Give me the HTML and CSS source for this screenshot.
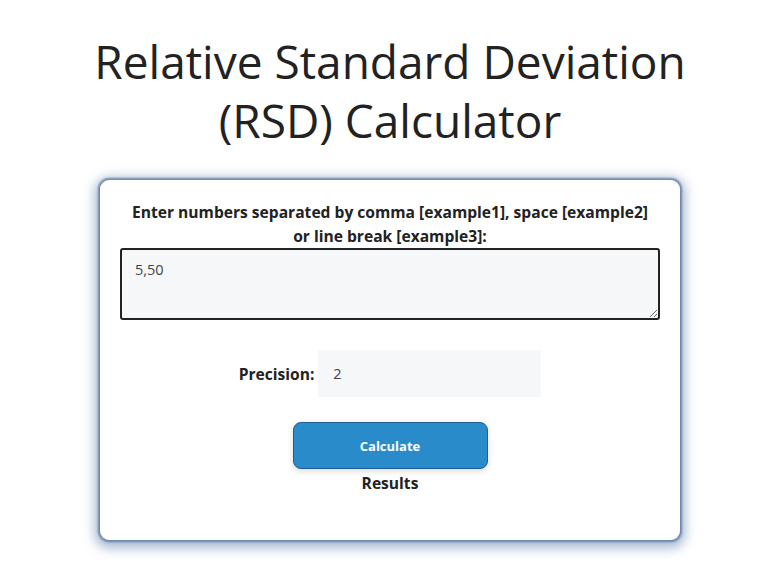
FILE: index.html
```html
<!DOCTYPE html>
<html>
<head>
<meta charset="utf-8">
<link rel="stylesheet" href="styles.css">
</head>
<body>
<div class="page">
  <h1 class="title">Relative Standard Deviation (RSD) Calculator</h1>
  <div class="card">
    <div class="label">Enter numbers separated by comma [example1], space [example2] or line break [example3]:</div>
    <textarea class="numbers">5,50</textarea>
    <div class="precision-row">
      <span class="precision-label">Precision:</span>
      <input class="precision-input" type="text" value="2">
    </div>
    <button class="calc-btn">Calculate</button>
    <div class="results">Results</div>
  </div>
</div>
</body>
</html>
```

FILE: styles.css
```css
html, body {
  margin: 0;
  padding: 0;
  background: #ffffff;
}
body {
  font-family: "Open Sans", "Noto Sans", sans-serif;
  color: #222;
}
.page {
  display: flex;
  flex-direction: column;
  align-items: center;
  padding-top: 32px;
  padding-left: 12px;
  padding-bottom: 20px;
}
.title {
  margin: 0;
  width: 640px;
  text-align: center;
  font-weight: 400;
  font-size: 46px;
  line-height: 59px;
  color: #222;
}
.card {
  margin-top: 30px;
  width: 580px;
  height: 360px;
  box-sizing: border-box;
  background: #fff;
  border-radius: 9px;
  box-shadow: 0 0 2px 2px rgba(95,125,165,0.85), 0 3px 12px 5px rgba(105,135,175,0.6);
  display: flex;
  flex-direction: column;
  align-items: center;
  padding: 20px 20px 0;
}
.label {
  width: 530px;
  text-align: center;
  font-weight: 700;
  font-size: 15.6px;
  line-height: 24px;
  color: #222;
}
.numbers {
  margin-top: 0;
  width: 540px;
  height: 72px;
  box-sizing: border-box;
  border: 2px solid #222;
  border-radius: 3px;
  background: #f6f7f9;
  padding: 10px 13px;
  font-family: "Open Sans", "Noto Sans", sans-serif;
  font-size: 14.5px;
  color: #444;
  resize: vertical;
}
.precision-row {
  margin-top: 30px;
  display: flex;
  align-items: center;
  gap: 4px;
}
.precision-label {
  font-weight: 700;
  font-size: 15.6px;
  color: #222;
}
.precision-input {
  width: 223px;
  height: 47px;
  box-sizing: border-box;
  border: none;
  background: #f5f7f9;
  padding: 0 15px;
  font-family: "Open Sans", "Noto Sans", sans-serif;
  font-size: 14.5px;
  color: #444;
}
.calc-btn {
  margin-top: 25px;
  width: 195px;
  height: 47px;
  border: 1px solid #1c5f9a;
  border-radius: 8px;
  background: #2a8bca;
  color: #fff;
  font-family: "Open Sans", "Noto Sans", sans-serif;
  font-weight: 700;
  font-size: 13px;
  box-shadow: 0 2px 6px rgba(0,0,0,0.15);
}
.results {
  margin-top: 2px;
  font-weight: 700;
  font-size: 15.6px;
  line-height: 24px;
  color: #222;
}
```
